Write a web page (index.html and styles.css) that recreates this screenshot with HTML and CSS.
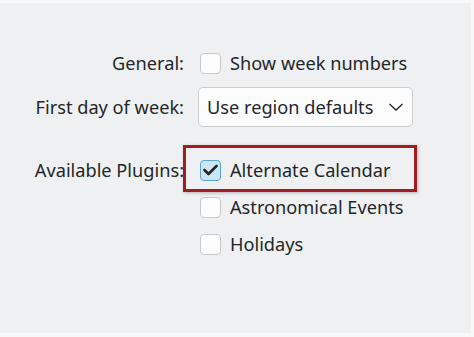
FILE: index.html
```html
<html>

<head>
    <link rel="stylesheet" href="styles.css">
</head>

<body>
    <div class="panel">
        <div class="row general">
            <div class="label">General:</div>
            <label class="check">
                <span class="box"></span>
                <span>Show week numbers</span>
            </label>
        </div>
        <div class="row firstday">
            <div class="label">First day of week:</div>
            <div class="combo">
                <span>Use region defaults</span>
                <svg class="arrow" width="16" height="10" viewBox="0 0 16 10">
                    <polyline points="1.5,2 8,8 14.5,2" fill="none" stroke="#232629" stroke-width="1.3" />
                </svg>
            </div>
        </div>
        <div class="row plugins">
            <div class="label">Available Plugins:</div>
            <div class="list">
                <label class="check highlight">
                    <span class="box checked">
                        <svg width="15" height="12" viewBox="0 0 15 12">
                            <polyline points="1.5,6 5.5,10 13.5,2" fill="none" stroke="#232629" stroke-width="2.6"
                                stroke-linecap="round" stroke-linejoin="round" />
                        </svg>
                    </span>
                    <span>Alternate Calendar</span>
                </label>
                <label class="check">
                    <span class="box"></span>
                    <span>Astronomical Events</span>
                </label>
                <label class="check">
                    <span class="box"></span>
                    <span>Holidays</span>
                </label>
            </div>
        </div>
    </div>
</body>

</html>
```

FILE: styles.css
```css
body {
    margin: 0;
    background: #f8f8f9;
    font-family: "Noto Sans", "Open Sans", sans-serif;
    font-size: 18.2px;
    color: #232629;
}

.panel {
    margin-top: 3px;
    width: 471px;
    height: 330px;
    background: #eff0f1;
    padding-top: 47px;
    box-sizing: border-box;
}

.row {
    display: flex;
    align-items: center;
    gap: 14px;
}

.label {
    width: 184px;
    text-align: right;
    line-height: 26px;
    flex-shrink: 0;
}

.firstday {
    margin-top: 11px;
}

.plugins {
    margin-top: 30px;
    align-items: flex-start;
}

.list {
    display: flex;
    flex-direction: column;
    gap: 11px;
}

.check {
    display: flex;
    align-items: center;
    gap: 9px;
    height: 26px;
    margin-left: 2px;
}

.box {
    width: 21px;
    height: 21px;
    box-sizing: border-box;
    border: 1px solid #c6c8ca;
    border-radius: 4px;
    background: #fcfcfc;
    display: flex;
    align-items: center;
    justify-content: center;
}

.box.checked {
    background: #cde6f5;
    border-color: #5aa6d6;
}

.combo {
    width: 215px;
    height: 40px;
    box-sizing: border-box;
    border: 1px solid #cbcdcf;
    border-radius: 5px;
    background: #fcfcfc;
    display: flex;
    align-items: center;
    justify-content: space-between;
    padding: 0 8px 0 8px;
}

.highlight {
    position: relative;
}

.highlight::after {
    content: "";
    position: absolute;
    top: -12px;
    left: -17px;
    width: 234px;
    height: 47px;
    box-sizing: border-box;
    border: 3px solid #a21d21;
    box-shadow: 1px 1px 3px rgba(0, 0, 0, 0.25);
}
```
